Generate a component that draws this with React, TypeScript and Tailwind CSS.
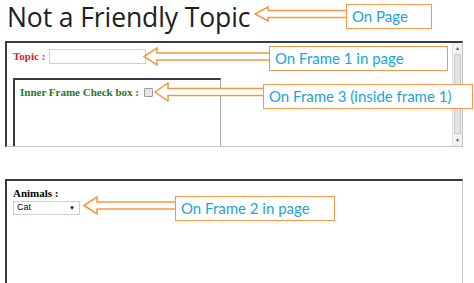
import React from 'react';

const ORANGE = '#f79646';

interface CalloutProps {
  tip: number;
  end: number;
  y: number;
  head?: number;
}

// hollow block arrow pointing left, drawn from tip (x) to end (x) at centre y
const Arrow = ({ tip, end, y, head = 18 }: CalloutProps) => {
  const w = end - tip;
  const h = head + 2;
  const c = h / 2;
  const hl = 14;
  const s = 3.5;
  const d = `M1 ${c} L${hl} ${c - head / 2} L${hl} ${c - s} L${w} ${c - s} L${w} ${c + s} L${hl} ${c + s} L${hl} ${c + head / 2} Z`;
  return (
    <svg
      className="absolute"
      style={{ left: tip, top: y - c }}
      width={w}
      height={h}
      viewBox={`0 0 ${w} ${h}`}
    >
      <path d={d} fill="white" stroke={ORANGE} strokeWidth={1.5} strokeLinejoin="miter" />
    </svg>
  );
};

const Label = ({
  className,
  children,
}: {
  className: string;
  children: React.ReactNode;
}) => (
  <div
    className={
      'absolute h-[25px] flex items-center pl-[5px] bg-white border-[1.5px] border-[#f79646] text-[15px] text-[#22a3d9] whitespace-nowrap ' +
      className
    }
    style={{ fontFamily: 'Lato, "Open Sans", sans-serif' }}
  >
    {children}
  </div>
);

const serif = { fontFamily: '"Liberation Serif", "Times New Roman", serif' };

export default function App() {
  return (
    <div className="relative w-[474px] h-[283px] overflow-hidden bg-white">
      <div
        className="h-[34px] pl-[7px] text-[26.5px] leading-[34px] tracking-[-0.1px] text-[#1e1e1e] whitespace-nowrap"
        style={{ fontFamily: '"Open Sans", "Noto Sans", sans-serif' }}
      >
        Not a Friendly Topic
      </div>

      {/* frame 1 */}
      <div className="ml-[5px] mt-[7px] w-[458px] h-[106px] flex overflow-hidden border-t-2 border-l-2 border-r border-b border-t-[#3a3a3a] border-l-[#3a3a3a] border-r-[#c4c4c4] border-b-[#c4c4c4]">
        <div className="flex-1 pl-[6px] pt-[6px]">
          <div className="flex items-center gap-[4px] h-[15px]">
            <span className="text-[11px] font-bold text-[#e0202a]" style={serif}>
              Topic :
            </span>
            <div className="w-[97px] h-[15px] border border-[#d0d0d0] bg-white" />
          </div>
          <div className="mt-[14px] w-[208px] h-[80px] border-t-2 border-l-2 border-r border-t-[#3a3a3a] border-l-[#3a3a3a] border-r-[#a8a8a8] pl-[5px] pt-[6px]">
            <div className="flex items-center gap-[5px] h-[12px]">
              <span className="text-[11px] font-bold text-[#1f7a1f]" style={serif}>
                Inner Frame Check box :
              </span>
              <div className="w-[9px] h-[9px] border border-[#9a9a9a] bg-[#e6e6e6] rounded-[1px]" />
            </div>
          </div>
        </div>
        {/* scrollbar */}
        <div className="w-[10px] flex flex-col bg-[#f2f2f2] border-l border-[#e2e2e2]">
          <div className="h-[11px] flex items-center justify-center text-[5px] text-[#555]">▲</div>
          <div className="mx-[1px] h-[80px] bg-[#e4e4e4] border border-[#c8c8c8] rounded-[1px] flex flex-col items-center justify-center gap-[1px]">
            <div className="w-[4px] h-px bg-[#888]" />
            <div className="w-[4px] h-px bg-[#888]" />
            <div className="w-[4px] h-px bg-[#888]" />
          </div>
          <div className="flex-1" />
          <div className="h-[11px] flex items-center justify-center text-[5px] text-[#555]">▼</div>
        </div>
      </div>

      {/* frame 2 */}
      <div className="ml-[5px] mt-[32px] w-[458px] h-[110px] border-t-2 border-l-2 border-r border-t-[#3a3a3a] border-l-[#3a3a3a] border-r-[#c4c4c4] pl-[6px] pt-[6px]">
        <div className="text-[11px] leading-[13px] font-bold text-black" style={serif}>
          Animals :
        </div>
        <div
          className="mt-[1px] w-[67px] h-[14px] border border-[#d0d0d0] flex items-center justify-between pl-[3px] pr-[4px] text-[9px] text-black"
          style={{ fontFamily: '"Liberation Sans", Arial, sans-serif' }}
        >
          <span>Cat</span>
          <span className="text-[6px]">▼</span>
        </div>
      </div>

      {/* callouts */}
      <Arrow tip={254} end={347} y={14} head={14} />
      <Label className="left-[346px] top-[4px] w-[86px]">On Page</Label>

      <Arrow tip={143} end={270} y={56} head={17} />
      <Label className="left-[269px] top-[46px] w-[179px]">On Frame 1 in page</Label>

      <Arrow tip={154} end={265} y={92} head={18} />
      <Label className="left-[263px] top-[84px] w-[210px]">On Frame 3 (inside frame 1)</Label>

      <Arrow tip={83} end={177} y={205} head={17} />
      <Label className="left-[175px] top-[196px] w-[160px]">On Frame 2 in page</Label>
    </div>
  );
}
